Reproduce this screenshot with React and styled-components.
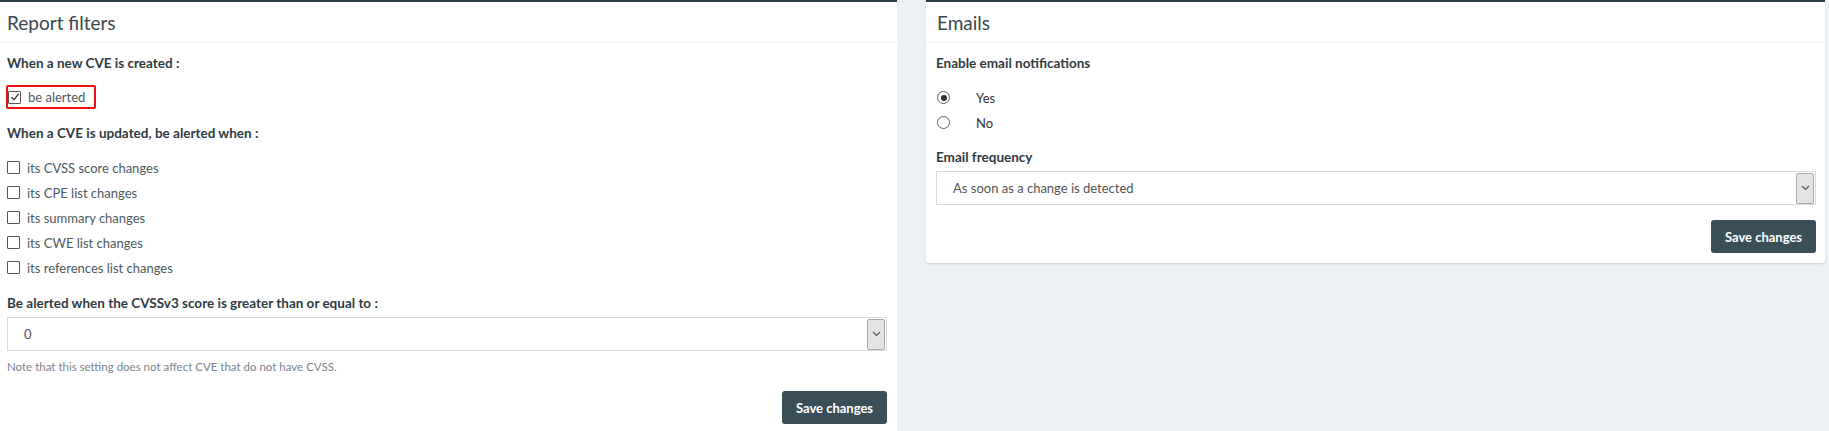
import React from "react";
import styled, { createGlobalStyle } from "styled-components";

const Global = createGlobalStyle`
  html, body { margin: 0; padding: 0; }
  body {
    background: #eceff3;
    font-family: "Lato", "Liberation Sans", sans-serif;
    color: #333;
    width: 1829px;
    height: 431px;
    overflow: hidden;
  }
  * { box-sizing: border-box; }
`;

const Page = styled.div`
  display: grid;
  grid-template-columns: 897px 899px;
  column-gap: 29px;
  align-items: start;
  height: 431px;
`;

const Panel = styled.section`
  background: #fff;
  border-top: 2px solid #2c3d44;
  border-radius: ${(p) => (p.$card ? "0 0 3px 3px" : "0")};
  box-shadow: ${(p) => (p.$card ? "0 1px 2px rgba(0,0,0,0.12)" : "none")};
  min-height: ${(p) => (p.$card ? "0" : "431px")};
`;

const Header = styled.header`
  height: 41px;
  display: flex;
  align-items: center;
  padding-left: ${(p) => p.$pad}px;
  border-bottom: 1px solid #f1f2f3;
`;

const Title = styled.h2`
  margin: 0;
  font-size: 19px;
  font-weight: 400;
  color: #3a474e;
`;

const Body = styled.div`
  padding: 10px ${(p) => p.$right}px 10px ${(p) => p.$left}px;
  display: flex;
  flex-direction: column;
`;

const Label = styled.div`
  font-size: 13.5px;
  font-weight: 700;
  color: #2f3b42;
  line-height: 20px;
  margin-top: ${(p) => p.$mt || 0}px;
  margin-bottom: ${(p) => p.$mb || 0}px;
`;

const CheckRow = styled.label`
  display: flex;
  align-items: center;
  gap: 7px;
  height: 25px;
  font-size: 13px;
  color: #4d5a61;
`;

const Highlight = styled.div`
  align-self: flex-start;
  margin-left: -1px;
  width: 90px;
  height: 24px;
  border: 2px solid #ee1111;
  border-radius: 2px;
  display: flex;
  align-items: center;
  margin-top: 12px;
  margin-bottom: 14px;
`;

const Box = styled.span`
  width: 13px;
  height: 13px;
  border: 1.5px solid #555;
  border-radius: 1px;
  display: inline-flex;
  align-items: center;
  justify-content: center;
  background: #fff;
  flex: none;
`;

const Radio = styled.span`
  width: 13px;
  height: 13px;
  border: 1.5px solid #606060;
  border-radius: 50%;
  display: inline-flex;
  align-items: center;
  justify-content: center;
  flex: none;
  &::after {
    content: "";
    width: 6px;
    height: 6px;
    border-radius: 50%;
    background: ${(p) => (p.$on ? "#333" : "transparent")};
  }
`;

const RadioRow = styled.label`
  display: flex;
  align-items: center;
  gap: 26px;
  height: 25px;
  font-size: 13px;
  color: #333;
  padding-left: 1px;
`;

const SelectBox = styled.div`
  height: 34px;
  border: 1px solid #d7dbe0;
  display: flex;
  align-items: center;
  justify-content: space-between;
  padding-left: ${(p) => p.$pl}px;
  padding-right: 1px;
  font-size: 13px;
  color: #555;
  background: #fff;
`;

const Arrow = styled.span`
  width: 18px;
  height: 31px;
  background: #e3e3e3;
  border: 1px solid #a9a9a9;
  border-radius: 2px;
  display: inline-flex;
  align-items: center;
  justify-content: center;
`;

const Note = styled.div`
  font-size: 11.5px;
  color: #7b858b;
  line-height: 16px;
  margin-top: 8px;
`;

const Actions = styled.div`
  display: flex;
  justify-content: flex-end;
  margin-top: ${(p) => p.$mt}px;
`;

const Button = styled.button`
  height: 33px;
  padding: 0 12px;
  width: 105px;
  background: #3a4f57;
  color: #fff;
  border: none;
  border-radius: 3px;
  font-family: inherit;
  font-size: 13px;
  font-weight: 700;
`;

const Check = () => (
  <svg width="10" height="10" viewBox="0 0 10 10">
    <path d="M1.5 5.2 L4 7.8 L8.8 1.8" fill="none" stroke="#444" strokeWidth="1.4" />
  </svg>
);

const Chevron = () => (
  <svg width="9" height="6" viewBox="0 0 9 6">
    <path d="M1 1 L4.5 4.5 L8 1" fill="none" stroke="#555" strokeWidth="1.2" />
  </svg>
);

const Select = ({ value, pl }) => (
  <SelectBox $pl={pl}>
    <span>{value}</span>
    <Arrow>
      <Chevron />
    </Arrow>
  </SelectBox>
);

const updates = [
  "its CVSS score changes",
  "its CPE list changes",
  "its summary changes",
  "its CWE list changes",
  "its references list changes",
];

export default function App() {
  return (
    <>
      <Global />
      <Page>
        <Panel>
          <Header $pad={7}>
            <Title>Report filters</Title>
          </Header>
          <Body $left={7} $right={10}>
            <Label>When a new CVE is created :</Label>
            <Highlight>
              <CheckRow>
                <Box>
                  <Check />
                </Box>
                be alerted
              </CheckRow>
            </Highlight>
            <Label $mb={12}>When a CVE is updated, be alerted when :</Label>
            {updates.map((u) => (
              <CheckRow key={u}>
                <Box />
                {u}
              </CheckRow>
            ))}
            <Label $mt={13} $mb={4}>
              Be alerted when the CVSSv3 score is greater than or equal to :
            </Label>
            <Select value="0" pl={16} />
            <Note>Note that this setting does not affect CVE that do not have CVSS.</Note>
            <Actions $mt={16}>
              <Button>Save changes</Button>
            </Actions>
          </Body>
        </Panel>
        <Panel $card>
          <Header $pad={11}>
            <Title>Emails</Title>
          </Header>
          <Body $left={10} $right={9}>
            <Label $mb={12}>Enable email notifications</Label>
            <RadioRow>
              <Radio $on />
              Yes
            </RadioRow>
            <RadioRow>
              <Radio />
              No
            </RadioRow>
            <Label $mt={12} $mb={4}>
              Email frequency
            </Label>
            <Select value="As soon as a change is detected" pl={16} />
            <Actions $mt={15}>
              <Button>Save changes</Button>
            </Actions>
          </Body>
        </Panel>
      </Page>
    </>
  );
}
